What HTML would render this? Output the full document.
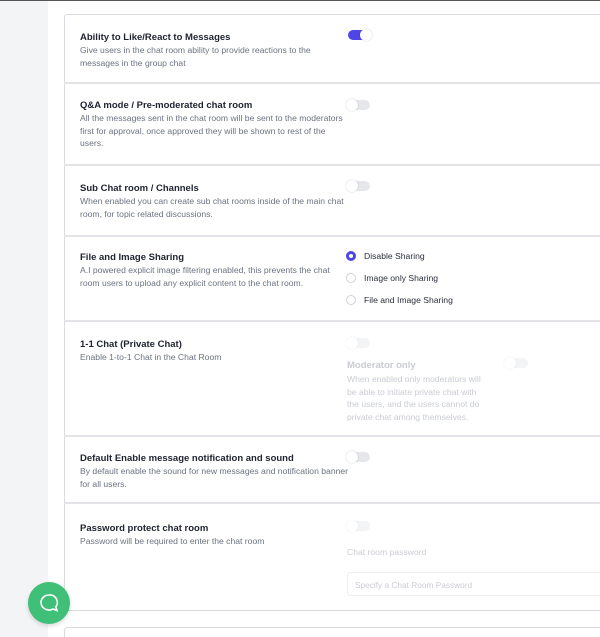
<!DOCTYPE html>
<html><head><style>
*{box-sizing:border-box;margin:0;padding:0}
html,body{width:600px;height:637px;overflow:hidden}
body{background:#fff;font-family:"Liberation Sans",sans-serif;position:relative}
.side{position:absolute;left:0;top:0;width:48px;height:637px;background:#f3f4f6}
.topline{position:absolute;left:0;top:0;width:600px;height:1px;background:#555}
.card{position:absolute;left:64px;top:14px;width:560px;height:597px;border:1px solid #d9dbe0;border-radius:3px;background:#fff}
.card2{position:absolute;left:64px;top:627px;width:560px;height:10px;border:1px solid #d9dbe0;border-bottom:none;border-radius:3px 3px 0 0}
.sep{position:absolute;left:64px;width:540px;height:2px;background:#e2e4e8}
.t{position:absolute;left:80px;font-size:9.5px;font-weight:bold;color:#1f2330}
.d{position:absolute;left:80px;font-size:8.6px;color:#6b7280;line-height:12.5px;width:262px}
.tg{position:absolute;width:23px;height:10px;border-radius:5px;background:#e5e7eb}
.tg::after{content:"";position:absolute;top:-1px;left:-1px;width:12px;height:12px;border-radius:50%;background:#fff;box-shadow:0 0 1.5px rgba(0,0,0,.25)}
.tg.on{background:#4f46e5}.tg.on::after{left:12px}
.tg.f{opacity:.45}
.r{position:absolute;left:346px;width:10px;height:10px;border-radius:50%;border:1px solid #cfd2d8}
.r.on{border:3px solid #4f46e5}
.rl{position:absolute;left:364px;font-size:8.6px;color:#2a2f3b}
.fade{color:#c9ccd2}
</style></head><body>
<div class="side"></div><div class="topline"></div>
<div class="card"></div><div class="card2"></div>
<div class="sep" style="top:82px"></div>
<div class="sep" style="top:164px"></div>
<div class="sep" style="top:235px"></div>
<div class="sep" style="top:320px"></div>
<div class="sep" style="top:435px"></div>
<div class="sep" style="top:502px"></div>

<div class="t" style="top:32px">Ability to Like/React to Messages</div>
<div class="d" style="top:44px;width:245px">Give users in the chat room ability to provide reactions to the messages in the group chat</div>
<div class="tg on" style="left:348px;top:30px"></div>

<div class="t" style="top:100px">Q&amp;A mode / Pre-moderated chat room</div>
<div class="d" style="top:112px;width:269px">All the messages sent in the chat room will be sent to the moderators first for approval, once approved they will be shown to rest of the users.</div>
<div class="tg" style="left:347px;top:100px"></div>

<div class="t" style="top:183px">Sub Chat room / Channels</div>
<div class="d" style="top:195px;width:275px">When enabled you can create sub chat rooms inside of the main chat room, for topic related discussions.</div>
<div class="tg" style="left:347px;top:181px"></div>

<div class="t" style="top:252px">File and Image Sharing</div>
<div class="d" style="top:264px;width:255px">A.I powered explicit image filtering enabled, this prevents the chat room users to upload any explicit content to the chat room.</div>
<div class="r on" style="top:251px"></div><div class="rl" style="top:251px">Disable Sharing</div>
<div class="r" style="top:273px"></div><div class="rl" style="top:273px">Image only Sharing</div>
<div class="r" style="top:295px"></div><div class="rl" style="top:295px">File and Image Sharing</div>

<div class="t" style="top:339px">1-1 Chat (Private Chat)</div>
<div class="d" style="top:351px">Enable 1-to-1 Chat in the Chat Room</div>
<div class="tg f" style="left:347px;top:338px"></div>
<div class="t fade" style="left:347px;top:360px">Moderator only</div>
<div class="d fade" style="left:347px;top:373px;width:140px">When enabled only moderators will be able to initiate private chat with the users, and the users cannot do private chat among themselves.</div>
<div class="tg f" style="left:505px;top:358px"></div>

<div class="t" style="top:453px">Default Enable message notification and sound</div>
<div class="d" style="top:465px;width:270px">By default enable the sound for new messages and notification banner for all users.</div>
<div class="tg" style="left:347px;top:452px"></div>

<div class="t" style="top:523px">Password protect chat room</div>
<div class="d" style="top:535px">Password will be required to enter the chat room</div>
<div class="tg f" style="left:347px;top:521px"></div>
<div class="d fade" style="left:347px;top:546px">Chat room password</div>
<div style="position:absolute;left:347px;top:572px;width:270px;height:24px;border:1px solid #eceef1;border-radius:3px;font-size:8.3px;color:#c9ccd2;padding:7px 7px">Specify a Chat Room Password</div>

<div style="position:absolute;left:28px;top:582px;width:42px;height:42px;border-radius:50%;background:#3fbf78;box-shadow:0 2px 4px rgba(0,0,0,.15)">
<svg width="42" height="42" viewBox="0 0 42 42"><path d="M21 13a8 7.5 0 1 0 4 14l4 1.5-1.2-3.5A7.5 7.5 0 0 0 21 13z" fill="none" stroke="#fff" stroke-width="1.6"/></svg></div>
</body></html>
